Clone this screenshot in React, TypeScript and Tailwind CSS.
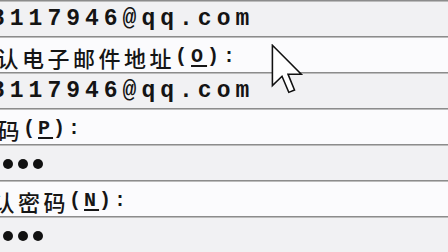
import React from "react";

const mono = { fontFamily: '"Liberation Mono", "DejaVu Sans Mono", monospace' };
const cjk = { fontFamily: '"Noto Sans CJK SC", "Liberation Sans", sans-serif' };

function Line() {
  return (
    <div className="flex flex-col">
      <div className="h-[1px] bg-[#8c8c8c]" />
      <div className="h-[1px] bg-[#bcbcbc]" />
    </div>
  );
}

function FieldRow({ children }: { children: React.ReactNode }) {
  return (
    <>
      <Line />
      <div className="h-[34px] bg-[#f1f1f3] flex items-center overflow-hidden whitespace-nowrap">{children}</div>
    </>
  );
}

function LabelRow({ children }: { children: React.ReactNode }) {
  return (
    <>
      <Line />
      <div className="h-[34px] bg-[#fbfbfd] flex items-center pt-[3px] overflow-hidden whitespace-nowrap">{children}</div>
    </>
  );
}

function Email() {
  return (
    <span className="ml-[-9px] text-[23px] font-bold leading-none tracking-[5px] text-[#141414]" style={mono}>
      8117946@qq.com
    </span>
  );
}

function Dots() {
  return (
    <div className="flex gap-[5px] ml-[3px] pt-[1px]">
      {[0, 1, 2].map((i) => (
        <span key={i} className="w-[10px] h-[10px] rounded-full bg-[#111]" />
      ))}
    </div>
  );
}

function Label({ cn, ml, keyChar, latinClass }: { cn: string; ml: string; keyChar: string; latinClass: string }) {
  return (
    <span className={`flex items-center text-[#151515] ${ml}`}>
      <span className="text-[22px] font-medium leading-none tracking-[3.5px]" style={cjk}>
        {cn}
      </span>
      <span className={`text-[20px] font-bold leading-none ${latinClass}`} style={mono}>
        (<span className="underline underline-offset-[3px]">{keyChar}</span>):
      </span>
    </span>
  );
}

export default function App() {
  return (
    <div className="relative w-[448px] h-[252px] overflow-hidden bg-[#f1f1f3] flex flex-col">
      <FieldRow>
        <Email />
      </FieldRow>
      <LabelRow>
        <Label cn="确认电子邮件地址" ml="ml-[-29px]" keyChar="O" latinClass="tracking-[4px]" />
      </LabelRow>
      <FieldRow>
        <Email />
      </FieldRow>
      <LabelRow>
        <Label cn="密码" ml="ml-[-28px]" keyChar="P" latinClass="tracking-[3px]" />
      </LabelRow>
      <FieldRow>
        <Dots />
      </FieldRow>
      <LabelRow>
        <Label cn="确认密码" ml="ml-[-33px]" keyChar="N" latinClass="tracking-[3px]" />
      </LabelRow>
      <FieldRow>
        <Dots />
      </FieldRow>

      <svg
        className="absolute left-[271px] top-[44px]"
        width="34"
        height="52"
        viewBox="0 0 13 20"
      >
        <path
          d="M0.5 0.5 L0.5 16 L4.2 12.4 L6.8 18.6 L9 17.7 L6.5 11.6 L11.6 11.6 Z"
          fill="#ffffff"
          stroke="#111111"
          strokeWidth="0.6"
          strokeLinejoin="miter"
        />
      </svg>
    </div>
  );
}
